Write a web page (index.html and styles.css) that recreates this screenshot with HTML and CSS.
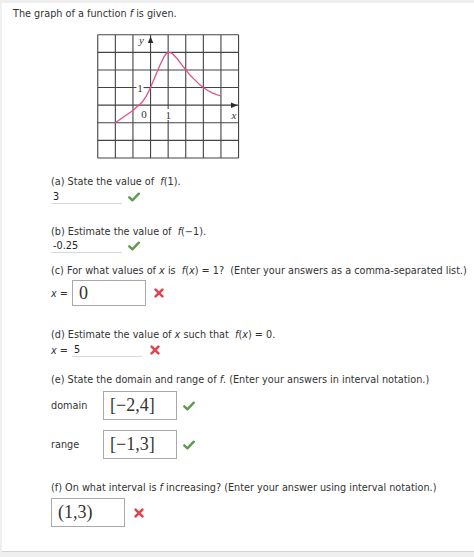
FILE: index.html
```html
<!DOCTYPE html>
<html>
<head>
<meta charset="utf-8">
<link rel="stylesheet" href="styles.css">
</head>
<body>
<div class="card">
  <p class="intro">The graph of a function <i>f</i> is given.</p>
  <svg class="graph" width="143" height="126" viewBox="0 0 143 126">
    <path class="grid" d="M0.75 0.75V123.95M18.35 0.75V123.95M35.95 0.75V123.95M53.55 0.75V123.95M71.15 0.75V123.95M88.75 0.75V123.95M106.35 0.75V123.95M123.95 0.75V123.95M141.55 0.75V123.95M0.75 0.75H141.55M0.75 18.35H141.55M0.75 35.95H141.55M0.75 53.55H141.55M0.75 71.15H141.55M0.75 88.75H141.55M0.75 106.35H141.55M0.75 123.95H141.55"/>
    <rect class="lblbg" x="39.5" y="48" width="7" height="11"/>
    <rect class="lblbg" x="68" y="75" width="6.5" height="11"/>
    <path class="grid" d="M47 53.55H53.55"/>
    <path class="arrow" d="M53.55 2.5L56.3 9L50.8 9Z"/>
    <path class="arrow" d="M140.5 71.15L134 68.4L134 73.9Z"/>
    <polyline class="curve" points="18.35,88.75 27.15,82.59 35.95,76.43 44.75,68.51 49.15,62.35 53.55,53.55 57.95,42.99 62.35,32.43 66.75,23.2 69.2,19.6 71.15,18.35 73.3,18.6 75.55,19.76 79.95,24.51 84.3,30.2 88.75,35.95 93.2,41.3 97.55,45.63 101.9,49.9 106.35,53.55 110.8,56.5 115.15,58.83 119.6,60.6 123.95,62"/>
    <text class="lbl it" x="44.5" y="9.5" text-anchor="middle">y</text>
    <text class="lbl" x="43" y="57.5" text-anchor="middle">1</text>
    <text class="lbl" x="47" y="84" text-anchor="middle">0</text>
    <text class="lbl" x="71.2" y="85" text-anchor="middle">1</text>
    <text class="lbl it" x="137" y="85" text-anchor="middle">x</text>
  </svg>

  <div class="parts">
    <div class="part pa">
      <p class="q">(a) State the value of &nbsp;<i>f</i>(1).</p>
      <div class="row r-blank">
        <span class="blank">3</span>
        <svg class="ok" width="12" height="10" viewBox="0 0 12 10"><path d="M1.3 5.3L4.4 8.3L10.8 1.7"/></svg>
      </div>
    </div>

    <div class="part pb">
      <p class="q">(b) Estimate the value of &nbsp;<i>f</i>(−1).</p>
      <div class="row r-blank">
        <span class="blank">-0.25</span>
        <svg class="ok" width="12" height="10" viewBox="0 0 12 10"><path d="M1.3 5.3L4.4 8.3L10.8 1.7"/></svg>
      </div>
    </div>

    <div class="part pc">
      <p class="q">(c) For what values of <i>x</i> is &nbsp;<i>f</i>(<i>x</i>) = 1? &nbsp;(Enter your answers as a comma-separated list.)</p>
      <div class="row r-box">
        <span class="var"><i>x</i> =</span>
        <span class="box">0</span>
        <svg class="bad" width="10" height="10" viewBox="0 0 10 10"><path d="M1.6 1.6L8.4 8.4M8.4 1.6L1.6 8.4"/></svg>
      </div>
    </div>

    <div class="part pd">
      <p class="q">(d) Estimate the value of <i>x</i> such that &nbsp;<i>f</i>(<i>x</i>) = 0.</p>
      <div class="row r-blank">
        <span class="var"><i>x</i> = </span>
        <span class="blank short">5</span>
        <svg class="bad" width="10" height="10" viewBox="0 0 10 10"><path d="M1.6 1.6L8.4 8.4M8.4 1.6L1.6 8.4"/></svg>
      </div>
    </div>

    <div class="part pe">
      <p class="q">(e) State the domain and range of <i>f</i>. (Enter your answers in interval notation.)</p>
      <div class="row r-dom">
        <span class="lab">domain</span>
        <span class="box tall">[−2,4]</span>
        <svg class="ok" width="12" height="10" viewBox="0 0 12 10"><path d="M1.3 5.3L4.4 8.3L10.8 1.7"/></svg>
      </div>
      <div class="row r-rng">
        <span class="lab">range</span>
        <span class="box tall">[−1,3]</span>
        <svg class="ok" width="12" height="10" viewBox="0 0 12 10"><path d="M1.3 5.3L4.4 8.3L10.8 1.7"/></svg>
      </div>
    </div>

    <div class="part pf">
      <p class="q">(f) On what interval is <i>f</i> increasing? (Enter your answer using interval notation.)</p>
      <div class="row r-f">
        <span class="box tall">(1,3)</span>
        <svg class="bad" width="10" height="10" viewBox="0 0 10 10"><path d="M1.6 1.6L8.4 8.4M8.4 1.6L1.6 8.4"/></svg>
      </div>
    </div>
  </div>
</div>
</body>
</html>
```

FILE: styles.css
```css
html, body {
  margin: 0;
  padding: 0;
}
body {
  background: #efefef;
  font-family: "DejaVu Sans", Verdana, sans-serif;
  font-size: 9.7px;
  color: #333;
}
.card {
  margin: 3px 0 0 2px;
  background: #fff;
  height: 549px;
  box-sizing: border-box;
  padding: 5px 0 0 11px;
  border-bottom: 1px solid #d2d2d2;
}
p { margin: 0; }
.intro { line-height: 12px; }
.graph {
  display: block;
  margin: 14px 0 0 84px;
}
.grid {
  fill: none;
  stroke: #444;
  stroke-width: 1.1;
}
.lblbg { fill: #fff; }
.arrow { fill: #2a2a2a; }
.curve {
  fill: none;
  stroke: #e2508a;
  stroke-width: 1.3;
  stroke-linejoin: round;
  stroke-linecap: round;
}
.lbl {
  font-family: "Liberation Serif", "Times New Roman", serif;
  font-size: 11px;
  fill: #333;
}
.lbl.it { font-style: italic; }

.parts { margin-left: 38px; }
.q { line-height: 12px; white-space: nowrap; }
.row {
  display: flex;
  align-items: center;
}
.blank {
  display: inline-block;
  width: 71px;
  height: 14px;
  line-height: 13px;
  box-sizing: border-box;
  padding-left: 2px;
  border-bottom: 1px solid #d8d8d8;
  color: #222;
}
.blank.short { width: 70px; }
.var { width: 21px; white-space: pre; }
.lab { width: 52px; }
.box {
  display: inline-block;
  width: 74px;
  height: 26px;
  box-sizing: border-box;
  border: 1px solid #a9a9a9;
  padding-left: 6px;
  font-family: "Liberation Serif", "Times New Roman", serif;
  font-size: 18px;
  line-height: 24px;
  color: #333;
}
.box.tall { height: 29px; line-height: 27px; }
.ok { margin-left: 6px; }
.ok path {
  fill: none;
  stroke: #5c9c4c;
  stroke-width: 2.4;
  stroke-linecap: round;
  stroke-linejoin: round;
}
.bad { margin-left: 8px; }
.bad path {
  fill: none;
  stroke: #e4434e;
  stroke-width: 2.6;
  stroke-linecap: round;
}

.pa { margin-top: 16px; }
.pa .r-blank { margin-top: 2px; }
.pb { margin-top: 22px; }
.pb .r-blank { margin-top: 1px; }
.pc { margin-top: 12px; }
.r-box { margin-top: 3px; }
.pd { margin-top: 23px; }
.pd .r-blank { margin-top: 2px; }
.pe { margin-top: 17px; }
.r-dom { margin-top: 5px; }
.r-rng { margin-top: 10px; }
.pf { margin-top: 23px; }
.r-f { margin-top: 4px; }
.pf .bad { margin-left: 9px; }
```
